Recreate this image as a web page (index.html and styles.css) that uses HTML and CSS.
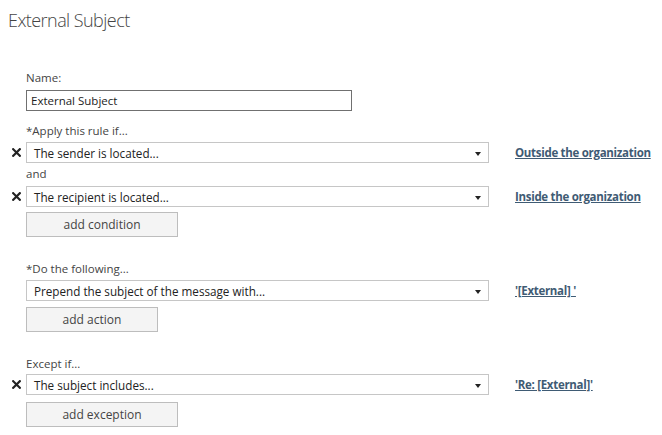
FILE: index.html
```html
<!DOCTYPE html>
<html>
<head>
<meta charset="utf-8">
<link rel="stylesheet" href="styles.css">
</head>
<body>
<div class="page">
  <h1 class="title">External Subject</h1>
  <div class="form">
    <div class="label label-name">Name:</div>
    <div class="name-input">External Subject</div>

    <div class="label label-first">*Apply this rule if...</div>
    <div class="row">
      <span class="remove"><svg width="9" height="9" viewBox="0 0 9 9"><path d="M1.2 1.2 L7.8 7.8 M7.8 1.2 L1.2 7.8" stroke="#222" stroke-width="2.2" stroke-linecap="square"/></svg></span>
      <div class="select"><span>The sender is located...</span><span class="arrow"></span></div>
      <a class="link" href="#">Outside the organization</a>
    </div>
    <div class="label label-and">and</div>
    <div class="row">
      <span class="remove"><svg width="9" height="9" viewBox="0 0 9 9"><path d="M1.2 1.2 L7.8 7.8 M7.8 1.2 L1.2 7.8" stroke="#222" stroke-width="2.2" stroke-linecap="square"/></svg></span>
      <div class="select"><span>The recipient is located...</span><span class="arrow"></span></div>
      <a class="link" href="#">Inside the organization</a>
    </div>
    <div class="btn-row"><button class="btn btn-condition">add condition</button></div>

    <div class="label label-section">*Do the following...</div>
    <div class="row">
      <div class="select"><span>Prepend the subject of the message with...</span><span class="arrow"></span></div>
      <a class="link" href="#">'[External] '</a>
    </div>
    <div class="btn-row btn-row-action"><button class="btn btn-action">add action</button></div>

    <div class="label label-section">Except if...</div>
    <div class="row row-except">
      <span class="remove"><svg width="9" height="9" viewBox="0 0 9 9"><path d="M1.2 1.2 L7.8 7.8 M7.8 1.2 L1.2 7.8" stroke="#222" stroke-width="2.2" stroke-linecap="square"/></svg></span>
      <div class="select"><span>The subject includes...</span><span class="arrow"></span></div>
      <a class="link" href="#">'Re: [External]'</a>
    </div>
    <div class="btn-row btn-row-except"><button class="btn btn-condition">add exception</button></div>
  </div>
</div>
</body>
</html>
```
FILE: styles.css
```css
html, body {
  margin: 0;
  padding: 0;
  background: #ffffff;
}
body {
  font-family: "Open Sans", "Noto Sans", "Liberation Sans", sans-serif;
  color: #333333;
  font-size: 12px;
}
.page {
  padding: 8px 0 0 8px;
}
.title {
  margin: 0;
  font-size: 18px;
  font-weight: 300;
  line-height: 24px;
  color: #444444;
  letter-spacing: -0.55px;
}
.form {
  padding-left: 18px;
  margin-top: 38px;
}
.label {
  font-size: 11.5px;
  line-height: 16px;
  color: #444444;
}
.label-name {
  margin-bottom: 4px;
}
.name-input {
  width: 320px;
  height: 19px;
  border: 1px solid #707070;
  font-size: 11.5px;
  line-height: 19px;
  padding-left: 4px;
  color: #222;
}
.label-first {
  margin-top: 12px;
  margin-bottom: 3px;
}
.label-and {
  margin-top: 3px;
  margin-bottom: 4px;
}
.label-section {
  margin-top: 24px;
  margin-bottom: 3px;
}
.row {
  display: grid;
  grid-template-columns: 463px auto;
  column-gap: 26px;
  align-items: center;
  position: relative;
}
.row-except {
  margin-top: -1px;
}
.remove {
  position: absolute;
  left: -14px;
  top: 6px;
  display: flex;
}
.select {
  box-sizing: border-box;
  height: 21px;
  border: 1px solid #c6c6c6;
  display: flex;
  align-items: center;
  justify-content: space-between;
  padding: 0 7px 0 7px;
  font-size: 11.7px;
  color: #222;
}
.arrow {
  width: 0;
  height: 0;
  border-left: 3.5px solid transparent;
  border-right: 3.5px solid transparent;
  border-top: 4px solid #222;
  margin-top: 2px;
}
.link {
  font-size: 11.5px;
  font-weight: 700;
  color: #3f5b74;
  text-decoration: underline;
  white-space: nowrap;
  letter-spacing: -0.3px;
}
.btn-row {
  margin-top: 5px;
}
.btn-row-action {
  margin-top: 6px;
}
.btn-row-except {
  margin-top: 7px;
}
.btn {
  box-sizing: border-box;
  height: 25px;
  background: #f4f4f4;
  border: 1px solid #bdbdbd;
  font-family: inherit;
  font-size: 12px;
  color: #444;
  padding: 0;
  margin: 0;
}
.btn-action {
  width: 132px;
}
.btn-condition {
  width: 152px;
}
```
